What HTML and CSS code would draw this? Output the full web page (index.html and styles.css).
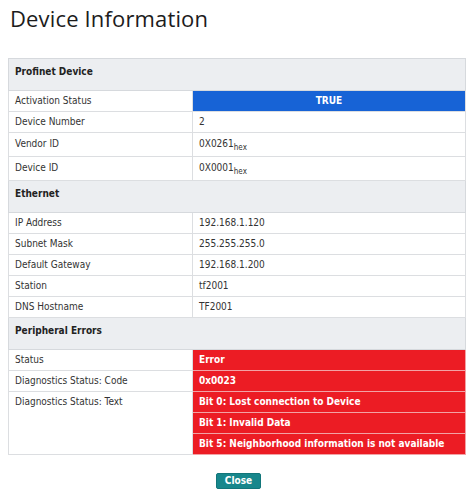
FILE: index.html
```html
<!DOCTYPE html>
<html>
<head>
<meta charset="utf-8">
<link rel="stylesheet" href="styles.css">
</head>
<body>
<div class="page">
  <h1 class="title">Device Information</h1>
  <table class="info">
    <colgroup><col class="c-lbl"><col class="c-val"></colgroup>
    <tr class="sect"><th colspan="2">Profinet Device</th></tr>
    <tr><td class="lbl">Activation Status</td><td class="val true">TRUE</td></tr>
    <tr><td class="lbl">Device Number</td><td class="val">2</td></tr>
    <tr class="hexrow"><td class="lbl">Vendor ID</td><td class="val">0X0261<sub>hex</sub></td></tr>
    <tr class="hexrow"><td class="lbl">Device ID</td><td class="val">0X0001<sub>hex</sub></td></tr>
    <tr class="sect"><th colspan="2">Ethernet</th></tr>
    <tr><td class="lbl">IP Address</td><td class="val">192.168.1.120</td></tr>
    <tr><td class="lbl">Subnet Mask</td><td class="val">255.255.255.0</td></tr>
    <tr><td class="lbl">Default Gateway</td><td class="val">192.168.1.200</td></tr>
    <tr><td class="lbl">Station</td><td class="val">tf2001</td></tr>
    <tr><td class="lbl">DNS Hostname</td><td class="val">TF2001</td></tr>
    <tr class="sect"><th colspan="2">Peripheral Errors</th></tr>
    <tr><td class="lbl">Status</td><td class="val err">Error</td></tr>
    <tr><td class="lbl">Diagnostics Status: Code</td><td class="val err">0x0023</td></tr>
    <tr><td class="lbl top" rowspan="3">Diagnostics Status: Text</td><td class="val err">Bit 0: Lost connection to Device</td></tr>
    <tr><td class="val err">Bit 1: Invalid Data</td></tr>
    <tr><td class="val err">Bit 5: Neighborhood information is not available</td></tr>
  </table>
  <div class="actions"><button class="btn-close">Close</button></div>
</div>
</body>
</html>
```
FILE: styles.css
```css
html, body {
  margin: 0;
  padding: 0;
  background: #ffffff;
}
.page {
  padding: 6px 8px 0 8px;
  font-family: "DejaVu Sans Condensed", "DejaVu Sans", sans-serif;
  font-size: 10px;
  color: #333333;
}
.title {
  margin: 0 0 0 2px;
  font-family: "Open Sans", sans-serif;
  font-weight: 400;
  font-size: 22px;
  line-height: 24px;
  color: #1c1c1c;
  letter-spacing: 0.15px;
}
.info {
  margin-top: 28px;
  width: 100%;
  border-collapse: collapse;
  border: 1px solid #cfd2d6;
  table-layout: fixed;
}
.c-lbl {
  width: 184px;
}
.info th {
  background: #eceef1;
  text-align: left;
  font-weight: bold;
  color: #222222;
  padding: 7px 6px 0 6px;
  height: 24px;
  vertical-align: top;
  line-height: 12px;
  border: 1px solid #d6d9dd;
}
.info td {
  padding: 4px 6px;
  line-height: 12px;
  height: 12px;
  border: 1px solid #dcdee1;
  vertical-align: middle;
}
.info td.top {
  vertical-align: top;
}
.info tr.hexrow td {
  padding: 5px 6px 6px 6px;
}
.info sub {
  font-size: 8px;
  line-height: 0;
  vertical-align: -3px;
}
.info td.true {
  background: #1763d6;
  color: #ffffff;
  font-weight: bold;
  text-align: center;
}
.info td.err {
  background: #ec1c24;
  color: #ffffff;
  font-weight: bold;
  border-color: #f2a2a5;
}
.actions {
  display: flex;
  justify-content: center;
  margin-top: 18px;
}
.btn-close {
  font-family: "DejaVu Sans Condensed", "DejaVu Sans", sans-serif;
  font-size: 10px;
  font-weight: bold;
  color: #ffffff;
  background: #17878c;
  border: 1px solid #12767a;
  border-radius: 2px;
  padding: 1px 8px;
  height: 16px;
  line-height: 12px;
  margin-left: 3px;
}
```
